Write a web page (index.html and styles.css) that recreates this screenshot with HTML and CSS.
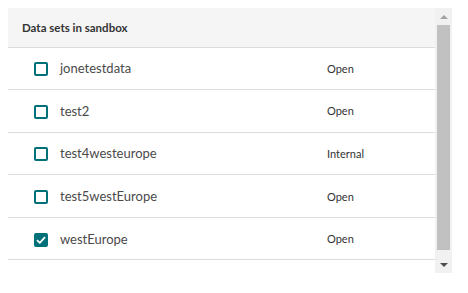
FILE: index.html
```html
<!DOCTYPE html>
<html lang="en">
<head>
    <meta charset="UTF-8">
    <title>Data sets in sandbox</title>
    <link rel="stylesheet" href="styles.css">
</head>
<body>
    <div class="panel">
        <div class="lista">
            <div class="cabecera">Data sets in sandbox</div>
            <div class="fila">
                <span class="caja"></span>
                <span class="nombre">jonetestdata</span>
                <span class="estado">Open</span>
            </div>
            <div class="fila">
                <span class="caja"></span>
                <span class="nombre">test2</span>
                <span class="estado">Open</span>
            </div>
            <div class="fila">
                <span class="caja"></span>
                <span class="nombre">test4westeurope</span>
                <span class="estado">Internal</span>
            </div>
            <div class="fila">
                <span class="caja"></span>
                <span class="nombre">test5westEurope</span>
                <span class="estado">Open</span>
            </div>
            <div class="fila">
                <span class="caja marcada">
                    <svg width="10" height="8" viewBox="0 0 10 8"><path d="M1 4.2 L3.8 6.8 L9 1.2" fill="none" stroke="#fff" stroke-width="1.8"/></svg>
                </span>
                <span class="nombre">westEurope</span>
                <span class="estado">Open</span>
            </div>
        </div>
        <div class="barra">
            <div class="flecha arriba"></div>
            <div class="pista"><div class="pulgar"></div></div>
            <div class="flecha abajo"></div>
        </div>
    </div>
</body>
</html>
```

FILE: styles.css
```css
* {
    box-sizing: border-box;
    padding: 0;
    margin: 0;
}

body {
    margin: 8px;
    font-family: Lato, "Liberation Sans", sans-serif;
    color: #3d3d3d;
    background: #fff;
}

.panel {
    display: flex;
    width: 444px;
    height: 265px;
}

.lista {
    flex: 1;
    overflow: hidden;
}

.cabecera {
    height: 39.5px;
    background-color: #f5f5f5;
    border-bottom: 1px solid #dcdcdc;
    padding-left: 14px;
    display: flex;
    align-items: center;
    font-size: 11.5px;
    font-weight: bold;
    color: #333;
}

.fila {
    height: 42.6px;
    border-bottom: 1px solid #dcdcdc;
    display: flex;
    align-items: center;
    padding-left: 26px;
}

.caja {
    width: 14px;
    height: 14px;
    border: 2px solid #007079;
    border-radius: 2px;
    margin-top: 2px;
    display: flex;
    align-items: center;
    justify-content: center;
}

.caja.marcada {
    background-color: #007079;
}

.nombre {
    margin-left: 12px;
    width: 267px;
    font-size: 13px;
    color: #4a4a4a;
}

.estado {
    font-size: 11px;
    color: #333;
}

.barra {
    width: 17px;
    background-color: #f1f1f1;
    display: flex;
    flex-direction: column;
}

.flecha {
    height: 17px;
    display: flex;
    align-items: center;
    justify-content: center;
}

.arriba::before {
    content: "";
    border-left: 4px solid transparent;
    border-right: 4px solid transparent;
    border-bottom: 4px solid #a3a3a3;
}

.abajo::before {
    content: "";
    border-left: 4px solid transparent;
    border-right: 4px solid transparent;
    border-top: 4px solid #505050;
}

.pista {
    flex: 1;
    padding: 0 2px;
}

.pulgar {
    height: 225px;
    background-color: #c1c1c1;
}
```
